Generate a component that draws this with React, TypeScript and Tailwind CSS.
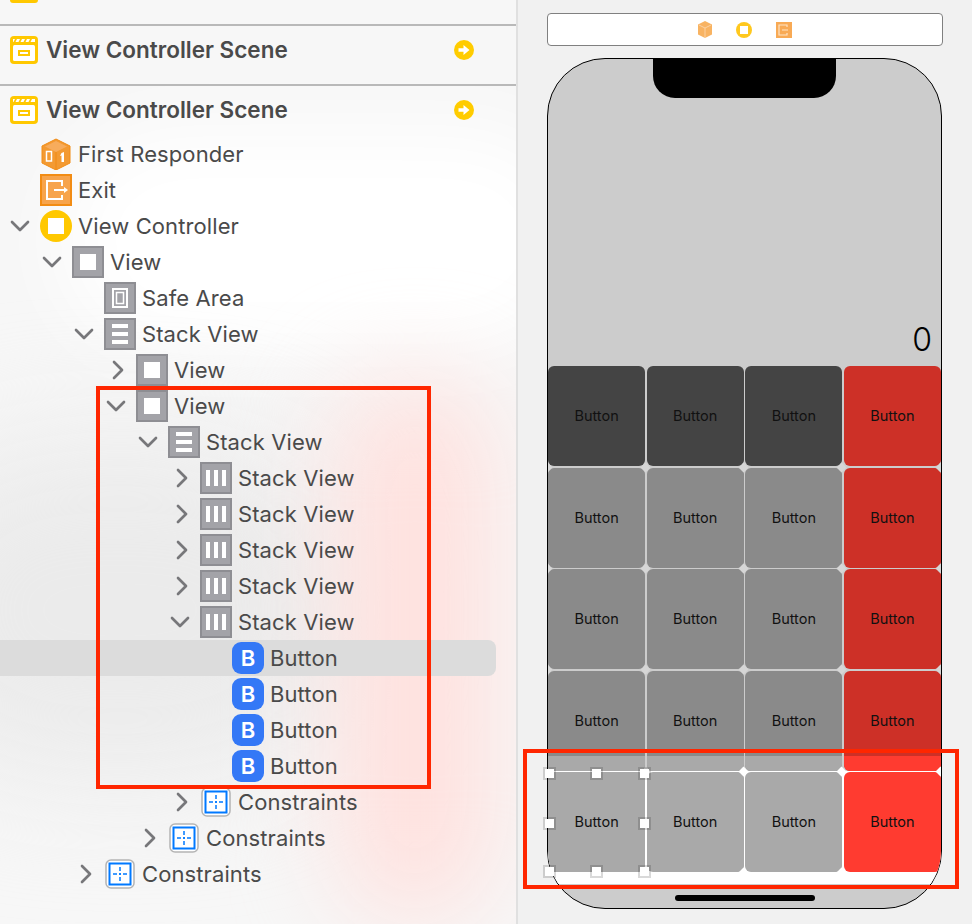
import { ChevronDown, ChevronRight } from 'lucide-react'

const font = { fontFamily: 'Inter, sans-serif' }

type Kind = 'cube' | 'exit' | 'vc' | 'view' | 'safe' | 'vstack' | 'hstack' | 'button' | 'constraints'
type Row = { depth: number; kind: Kind; label: string; arrow?: 'open' | 'closed'; selected?: boolean }

const rows: Row[] = [
  { depth: 1, kind: 'cube', label: 'First Responder' },
  { depth: 1, kind: 'exit', label: 'Exit' },
  { depth: 1, kind: 'vc', label: 'View Controller', arrow: 'open' },
  { depth: 2, kind: 'view', label: 'View', arrow: 'open' },
  { depth: 3, kind: 'safe', label: 'Safe Area' },
  { depth: 3, kind: 'vstack', label: 'Stack View', arrow: 'open' },
  { depth: 4, kind: 'view', label: 'View', arrow: 'closed' },
  { depth: 4, kind: 'view', label: 'View', arrow: 'open' },
  { depth: 5, kind: 'vstack', label: 'Stack View', arrow: 'open' },
  { depth: 6, kind: 'hstack', label: 'Stack View', arrow: 'closed' },
  { depth: 6, kind: 'hstack', label: 'Stack View', arrow: 'closed' },
  { depth: 6, kind: 'hstack', label: 'Stack View', arrow: 'closed' },
  { depth: 6, kind: 'hstack', label: 'Stack View', arrow: 'closed' },
  { depth: 6, kind: 'hstack', label: 'Stack View', arrow: 'open' },
  { depth: 7, kind: 'button', label: 'Button', selected: true },
  { depth: 7, kind: 'button', label: 'Button' },
  { depth: 7, kind: 'button', label: 'Button' },
  { depth: 7, kind: 'button', label: 'Button' },
  { depth: 6, kind: 'constraints', label: 'Constraints', arrow: 'closed' },
  { depth: 5, kind: 'constraints', label: 'Constraints', arrow: 'closed' },
  { depth: 3, kind: 'constraints', label: 'Constraints', arrow: 'closed' },
]

function SceneIcon() {
  return (
    <svg width="28" height="28" viewBox="0 0 28 28">
      <rect x="0" y="0" width="28" height="28" rx="4" fill="#ffc800" />
      <rect x="3" y="3" width="22" height="3" fill="#fff" />
      <path d="M5 3h2l-1.5 3h-2zM10 3h2l-1.5 3h-2zM15 3h2l-1.5 3h-2zM20 3h2l-1.5 3h-2z" fill="#ffc800" />
      <rect x="3" y="9" width="22" height="16" rx="1.5" fill="#fff" />
      <rect x="8" y="14" width="12" height="6" fill="#ffc800" />
      <rect x="10" y="16" width="8" height="2" fill="#fff" />
    </svg>
  )
}

function ArrowBadge() {
  return (
    <svg width="20" height="20" viewBox="0 0 20 20">
      <circle cx="10" cy="10" r="10" fill="#ffcc00" />
      <path d="M4.500 8.200h5V5l6 5-6 5v-3.200h-5z" fill="#fff" />
    </svg>
  )
}

function TreeIcon({ kind }: { kind: Kind }) {
  if (kind === 'cube') {
    return (
      <svg width="32" height="32" viewBox="0 0 32 32">
        <path d="M16 1l14 7v17l-14 7-14-7V8z" fill="#f39a32" stroke="#f28c14" strokeWidth="1" />
        <path d="M16 3l11 5.500L16 14 5 8.500z" fill="#f7ac5c" />
        <rect x="6.500" y="13.500" width="5" height="9.500" fill="none" stroke="#fff" strokeWidth="1.500" />
        <path d="M21.500 15l2.500-1v10h-2.500v-6.500l-1.500.6z" fill="#fff" />
        <path d="M16 14v18" stroke="#f08a14" strokeWidth="1" />
      </svg>
    )
  }
  if (kind === 'exit') {
    return (
      <svg width="32" height="32" viewBox="0 0 32 32">
        <rect x="1" y="1" width="30" height="30" fill="#f7a44c" stroke="#f28c14" strokeWidth="2" />
        <path d="M22 12V7H7v18h15v-4" fill="none" stroke="#fff" strokeWidth="2" />
        <path d="M14 16h10" stroke="#fff" strokeWidth="2" />
        <path d="M24 13l4 3-4 3z" fill="#fff" />
      </svg>
    )
  }
  if (kind === 'vc') {
    return (
      <svg width="32" height="32" viewBox="0 0 32 32">
        <circle cx="16" cy="16" r="16" fill="#ffc800" />
        <rect x="8" y="8" width="16" height="16" fill="#fff" />
      </svg>
    )
  }
  if (kind === 'button') {
    return (
      <div className="flex h-8 w-8 items-center justify-center rounded-[9px] bg-[#3478f6] text-[22px] font-semibold leading-none text-white">
        B
      </div>
    )
  }
  if (kind === 'constraints') {
    return (
      <svg width="30" height="30" viewBox="0 0 30 30">
        <rect x="1" y="1" width="28" height="28" rx="5" fill="#fff" stroke="#b4b4b4" strokeWidth="1.500" />
        <rect x="4.500" y="4.500" width="21" height="21" fill="#fff" stroke="#0079ff" strokeWidth="2" />
        <path d="M15 8v4M15 14v2M15 18v4M8 15h4M14 15h2M18 15h4" stroke="#0079ff" strokeWidth="1.500" />
      </svg>
    )
  }
  return (
    <svg width="32" height="32" viewBox="0 0 32 32">
      <rect x="1" y="1" width="30" height="30" fill="#a3a3a8" stroke="#8e8e93" strokeWidth="2" />
      {kind === 'view' && <rect x="8" y="8" width="16" height="16" fill="#fff" />}
      {kind === 'safe' && (
        <>
          <rect x="8" y="6" width="16" height="20" fill="#fff" />
          <rect x="10" y="8" width="12" height="16" fill="#a3a3a8" />
          <rect x="12.500" y="10.500" width="7" height="11" fill="none" stroke="#fff" strokeWidth="1.500" />
        </>
      )}
      {kind === 'vstack' && (
        <>
          <rect x="8" y="6" width="16" height="4" fill="#fff" />
          <rect x="8" y="14" width="16" height="4" fill="#fff" />
          <rect x="8" y="22" width="16" height="4" fill="#fff" />
        </>
      )}
      {kind === 'hstack' && (
        <>
          <rect x="6" y="8" width="4" height="16" fill="#fff" />
          <rect x="14" y="8" width="4" height="16" fill="#fff" />
          <rect x="22" y="8" width="4" height="16" fill="#fff" />
        </>
      )}
    </svg>
  )
}

function TreeRow({ row }: { row: Row }) {
  return (
    <div className={`flex h-9 items-center rounded-r-lg ${row.selected ? 'bg-[#dcdcdc]' : ''}`}>
      <div className="flex shrink-0 items-center justify-end pr-1" style={{ width: row.depth * 32 + 8 }}>
        {row.arrow === 'open' && <ChevronDown className="h-8 w-8 text-[#77777a]" strokeWidth={2} />}
        {row.arrow === 'closed' && <ChevronRight className="h-8 w-8 translate-x-0.5 text-[#77777a]" strokeWidth={2} />}
      </div>
      <div className="flex w-8 shrink-0 items-center justify-center">
        <TreeIcon kind={row.kind} />
      </div>
      <span className="ml-1.5 text-[22px] leading-none tracking-[0.1px] text-[#4a4a4a]">{row.label}</span>
    </div>
  )
}

function SceneLabel() {
  return <span className="ml-2 flex-1 text-[22.500px] font-semibold leading-none text-[#4a4a4a]">View Controller Scene</span>
}

function Cell({ tone, cover }: { tone: string; cover?: string }) {
  return (
    <div className={`relative flex flex-1 items-center justify-center overflow-hidden rounded-md text-[14.500px] text-[#111111] ${tone}`}>
      Button
      {cover && <div className={`absolute inset-x-0 bottom-0 h-[15px] ${cover}`} />}
    </div>
  )
}

function GridRow({ tones, covers }: { tones: string[]; covers?: string[] }) {
  return (
    <div className="flex h-[100px] gap-[1.500px]">
      {tones.map((t, i) => (
        <Cell key={i} tone={t} cover={covers?.[i]} />
      ))}
    </div>
  )
}

function Handle({ className }: { className: string }) {
  return <div className={`absolute h-[13px] w-[13px] border-2 border-black/15 bg-white bg-clip-padding ${className}`} />
}

function Diamond({ className }: { className: string }) {
  return <div className={`absolute h-[7px] w-[7px] rotate-45 ${className}`} />
}

export default function App() {
  const gray = ['bg-[#8a8a8a]', 'bg-[#8a8a8a]', 'bg-[#8a8a8a]', 'bg-[#cd3027]']
  const light = ['bg-[#a9a9a9]', 'bg-[#a9a9a9]', 'bg-[#a9a9a9]', 'bg-[#ff3b30]']
  return (
    <div className="relative flex h-[924px] w-[972px] overflow-hidden bg-[#f1f1f1]" style={font}>
      <div className="relative h-full w-[518px] shrink-0 overflow-hidden border-r-2 border-[#e0e0e0] bg-[#f7f7f7]">
        <div className="pointer-events-none absolute left-[60px] top-[130px] h-[220px] w-[520px] rounded-full bg-white blur-[40px]" />
        <div className="pointer-events-none absolute left-[-120px] top-[440px] h-[340px] w-[480px] rounded-full bg-[#ebebeb] blur-[60px]" />
        <div className="pointer-events-none absolute left-[340px] top-[380px] h-[540px] w-[150px] rounded-full bg-[#ffe0dd] blur-[50px]" />
        <div className="relative">
          <div className="h-[26px] border-b-2 border-[#b9b9b9]">
            <div className="ml-2.5 h-[3px] w-7 rounded-b bg-[#ffc800]" />
          </div>
          <div className="flex h-[60px] items-center border-b-2 border-[#b9b9b9] pb-2.5 pl-2.5 pr-[42px]">
            <SceneIcon />
            <SceneLabel />
            <ArrowBadge />
          </div>
          <div className="flex h-[50px] items-center pb-0.5 pl-2.5 pr-[42px]">
            <SceneIcon />
            <SceneLabel />
            <ArrowBadge />
          </div>
          <div className="w-[496px]">
            {rows.map((r, i) => (
              <TreeRow key={i} row={r} />
            ))}
          </div>
        </div>
      </div>

      <div className="flex flex-1 flex-col pl-[29px] pr-[30px] pt-[13px]">
        <div className="flex h-[33px] w-[396px] items-center justify-center gap-6 rounded-[4px] border border-[#808080] bg-white">
          <svg width="14" height="17" viewBox="0 0 14 17" className="opacity-80">
            <path d="M7 0l7 3.500v10L7 17l-7-3.500v-10z" fill="#f7a13c" />
            <path d="M7 7v10M1 4l6 3 6-3" stroke="#fbc78c" strokeWidth="1" fill="none" />
          </svg>
          <svg width="16" height="16" viewBox="0 0 16 16">
            <circle cx="8" cy="8" r="8" fill="#ffc81e" />
            <rect x="4" y="4" width="8" height="8" fill="#fff" />
          </svg>
          <svg width="16" height="16" viewBox="0 0 16 16">
            <rect width="16" height="16" fill="#f8aa55" />
            <path d="M11 5V3H3v10h8v-2M6 8h6" fill="none" stroke="#fde3c6" strokeWidth="1.200" />
          </svg>
        </div>

        <div className="relative mt-3 flex h-[851px] w-[395px] flex-col overflow-hidden rounded-[58px] border border-black bg-[#cccccc]">
          <div className="mx-auto h-[39px] w-[183px] rounded-b-[22px] bg-black" />
          <div className="flex flex-1 items-end justify-end pb-2.5 pr-[9px]">
            <span className="text-[32px] font-light leading-none text-black">0</span>
          </div>
          <div className="flex flex-col gap-[1.500px]">
            <GridRow tones={['bg-[#444444]', 'bg-[#444444]', 'bg-[#444444]', 'bg-[#cd3027]']} />
            <GridRow tones={gray} />
            <GridRow tones={gray} />
            <GridRow tones={gray} covers={light} />
          </div>
          <div className="bg-white pb-3 pt-[1.500px]">
            <GridRow tones={light} />
          </div>
          <div className="flex h-6 items-end justify-center pb-[7px]">
            <div className="h-1.5 w-[140px] rounded-full bg-black" />
          </div>
          {[405, 506, 607].map(top => (
            <div key={top} className="absolute inset-x-0" style={{ top }}>
              <Diamond className="left-[-4px] bg-[#d6d6d6]" />
              <Diamond className="left-[94px] bg-[#d6d6d6]" />
              <Diamond className="left-[192px] bg-[#d6d6d6]" />
              <Diamond className="left-[290px] bg-[#d6d6d6]" />
              <Diamond className="left-[389px] bg-[#d6d6d6]" />
            </div>
          ))}
          <Diamond className="left-[192px] top-[709px] bg-white" />
          <Diamond className="left-[290px] top-[709px] bg-white" />
          <Diamond className="left-[389px] top-[709px] bg-white" />
          <Diamond className="left-[192px] top-[810px] bg-white" />
          <Diamond className="left-[290px] top-[810px] bg-white" />
        </div>
      </div>

      {/* selection handles on the first button of the last row */}
      <Handle className="left-[543px] top-[767px]" />
      <Handle className="left-[590px] top-[767px]" />
      <Handle className="left-[638px] top-[767px]" />
      <Handle className="left-[543px] top-[817px]" />
      <Handle className="left-[638px] top-[817px]" />
      <Handle className="left-[543px] top-[865px]" />
      <Handle className="left-[590px] top-[865px]" />
      <Handle className="left-[638px] top-[865px]" />

      {/* red annotation boxes */}
      <div className="pointer-events-none absolute left-[96px] top-[386px] h-[403px] w-[335px] border-4 border-[#ff2600]" />
      <div className="pointer-events-none absolute left-[523px] top-[749px] h-[140px] w-[436px] border-4 border-[#ff2600]" />
    </div>
  )
}
